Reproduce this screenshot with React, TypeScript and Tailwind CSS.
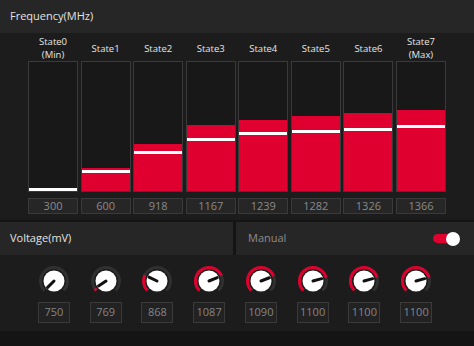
import React from 'react';

const states = [
  { name: 'State0', sub: '(Min)', value: 300, fill: 0, line: 0 },
  { name: 'State1', value: 600, fill: 23, line: 18 },
  { name: 'State2', value: 918, fill: 47, line: 37 },
  { name: 'State3', value: 1167, fill: 66, line: 50 },
  { name: 'State4', value: 1239, fill: 71, line: 56 },
  { name: 'State5', value: 1282, fill: 75, line: 58 },
  { name: 'State6', value: 1326, fill: 78, line: 60 },
  { name: 'State7', sub: '(Max)', value: 1366, fill: 81, line: 63 },
];

const voltages = [750, 769, 868, 1087, 1090, 1100, 1100, 1100];

function pt(r: number, deg: number) {
  const a = (deg * Math.PI) / 180;
  return [16 + r * Math.sin(a), 16 - r * Math.cos(a)];
}

function arc(r: number, from: number, to: number) {
  const [x1, y1] = pt(r, from);
  const [x2, y2] = pt(r, to);
  const large = to - from > 180 ? 1 : 0;
  return `M ${x1} ${y1} A ${r} ${r} 0 ${large} 1 ${x2} ${y2}`;
}

function Knob({ value }: { value: number }) {
  const frac = Math.min(1, Math.max(0, (value - 750) / 450));
  const angle = -135 + frac * 270;
  const [px, py] = pt(9, angle);
  return (
    <svg width="32" height="32" viewBox="0 0 32 32">
      <path d={arc(13.5, -135, 135)} stroke="#303030" strokeWidth="3" fill="none" />
      {frac > 0 && (
        <path d={arc(13.5, -135, angle)} stroke="#e0002f" strokeWidth="3" fill="none" />
      )}
      <circle cx="16" cy="16" r="10.5" fill="#ffffff" />
      <line x1="16" y1="16" x2={px} y2={py} stroke="#111" strokeWidth="3" strokeLinecap="round" />
    </svg>
  );
}

export default function App() {
  return (
    <div className="w-[474px] h-[346px] bg-[#141414] overflow-hidden font-['Open_Sans','Noto_Sans',sans-serif]">
      <div className="h-[33px] bg-[#262626] flex items-center px-[10px] text-[11px] text-[#e2e2e2]">
        Frequency(MHz)
      </div>
      <div className="h-[187px] bg-[#1c1c1c] pt-[2px]">
        <div className="ml-[28px] w-[418px] grid grid-cols-8 gap-x-[2.5px]">
          {states.map((s) => (
            <div key={s.name} className="flex flex-col">
              <div className="h-[26px] flex flex-col items-center justify-center text-[9.5px] leading-[13px] text-[#e6e6e6]">
                <span>{s.name}</span>
                {s.sub && <span>{s.sub}</span>}
              </div>
              <div className="relative h-[131px] border border-[#3a3a3a] bg-[#181818]">
                <div className="absolute left-0 right-0 bottom-0 bg-[#e0002f]" style={{ height: s.fill }} />
                <div className="absolute left-0 right-0 h-[3px] bg-white" style={{ bottom: s.line }} />
              </div>
              <div className="mt-[6px] h-[16px] border border-[#3a3a3a] bg-[#262626] flex items-center justify-center text-[11px] text-[#8a8a8a]">
                {s.value}
              </div>
            </div>
          ))}
        </div>
      </div>
      <div className="mt-[2px] flex gap-[3px] h-[33px]">
        <div className="w-[233px] bg-[#262626] flex items-center px-[10px] text-[11px] text-[#e2e2e2]">
          Voltage(mV)
        </div>
        <div className="flex-1 bg-[#262626] flex items-center justify-between pl-[12px] pr-[14px] text-[11px] text-[#8c8c8c]">
          <span>Manual</span>
          <div className="relative w-[27px] h-[14px] flex items-center">
            <div className="w-[22px] h-[9px] rounded-full bg-[#e0002f]" />
            <div className="absolute right-0 w-[14px] h-[14px] rounded-full bg-white" />
          </div>
        </div>
      </div>
      <div className="h-[76px] bg-[#1c1c1c] pt-[10px]">
        <div className="ml-[28px] w-[414px] grid grid-cols-8">
          {voltages.map((v, i) => (
            <div key={i} className="flex flex-col items-center">
              <Knob value={v} />
              <div className="mt-[5px] w-[32px] h-[21px] border border-[#3a3a3a] bg-[#222222] flex items-center justify-center text-[11px] text-[#858585]">
                {v}
              </div>
            </div>
          ))}
        </div>
      </div>
    </div>
  );
}
